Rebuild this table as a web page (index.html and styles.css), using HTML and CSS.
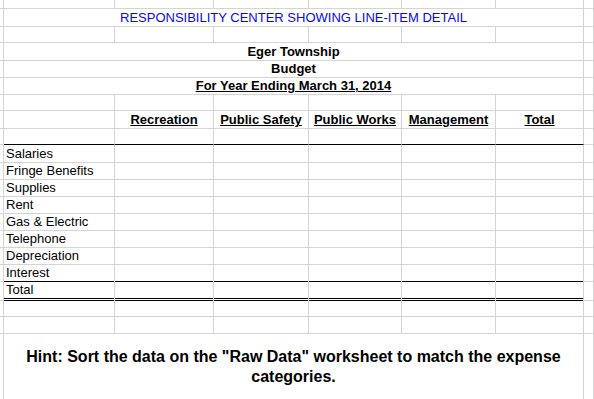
FILE: index.html
```html
<!DOCTYPE html>
<html lang="en">
<head>
<meta charset="utf-8">
<title>Responsibility Center Showing Line-Item Detail</title>
<link rel="stylesheet" href="styles.css">
</head>
<body>
<div class="sheet">
  <div class="row row-top">
    <div class="cell"></div><div class="cell"></div><div class="cell"></div><div class="cell"></div>
    <div class="cell"></div><div class="cell"></div><div class="cell"></div><div class="cell"></div>
  </div>

  <div class="row">
    <div class="cell"></div>
    <div class="cell span title">RESPONSIBILITY CENTER SHOWING LINE-ITEM DETAIL</div>
    <div class="cell"></div>
  </div>

  <div class="row">
    <div class="cell"></div><div class="cell"></div><div class="cell"></div><div class="cell"></div>
    <div class="cell"></div><div class="cell"></div><div class="cell"></div><div class="cell"></div>
  </div>

  <div class="row">
    <div class="cell"></div>
    <div class="cell span strong">Eger Township</div>
    <div class="cell"></div>
  </div>

  <div class="row">
    <div class="cell"></div>
    <div class="cell span strong">Budget</div>
    <div class="cell"></div>
  </div>

  <div class="row">
    <div class="cell"></div>
    <div class="cell span strong"><span class="underlined">For Year Ending March 31, 2014</span></div>
    <div class="cell"></div>
  </div>

  <div class="row">
    <div class="cell"></div><div class="cell"></div><div class="cell"></div><div class="cell"></div>
    <div class="cell"></div><div class="cell"></div><div class="cell"></div><div class="cell"></div>
  </div>

  <div class="row">
    <div class="cell"></div>
    <div class="cell"></div>
    <div class="cell col-head"><span class="underlined">Recreation</span></div>
    <div class="cell col-head"><span class="underlined">Public Safety</span></div>
    <div class="cell col-head"><span class="underlined">Public Works</span></div>
    <div class="cell col-head"><span class="underlined">Management</span></div>
    <div class="cell col-head"><span class="underlined">Total</span></div>
    <div class="cell"></div>
  </div>

  <div class="row">
    <div class="cell"></div>
    <div class="cell rule-below"></div><div class="cell rule-below"></div><div class="cell rule-below"></div>
    <div class="cell rule-below"></div><div class="cell rule-below"></div><div class="cell rule-below"></div>
    <div class="cell"></div>
  </div>

  <div class="row">
    <div class="cell"></div><div class="cell label">Salaries</div><div class="cell"></div><div class="cell"></div>
    <div class="cell"></div><div class="cell"></div><div class="cell"></div><div class="cell"></div>
  </div>
  <div class="row">
    <div class="cell"></div><div class="cell label">Fringe Benefits</div><div class="cell"></div><div class="cell"></div>
    <div class="cell"></div><div class="cell"></div><div class="cell"></div><div class="cell"></div>
  </div>
  <div class="row">
    <div class="cell"></div><div class="cell label">Supplies</div><div class="cell"></div><div class="cell"></div>
    <div class="cell"></div><div class="cell"></div><div class="cell"></div><div class="cell"></div>
  </div>
  <div class="row">
    <div class="cell"></div><div class="cell label">Rent</div><div class="cell"></div><div class="cell"></div>
    <div class="cell"></div><div class="cell"></div><div class="cell"></div><div class="cell"></div>
  </div>
  <div class="row">
    <div class="cell"></div><div class="cell label">Gas &amp; Electric</div><div class="cell"></div><div class="cell"></div>
    <div class="cell"></div><div class="cell"></div><div class="cell"></div><div class="cell"></div>
  </div>
  <div class="row">
    <div class="cell"></div><div class="cell label">Telephone</div><div class="cell"></div><div class="cell"></div>
    <div class="cell"></div><div class="cell"></div><div class="cell"></div><div class="cell"></div>
  </div>
  <div class="row">
    <div class="cell"></div><div class="cell label">Depreciation</div><div class="cell"></div><div class="cell"></div>
    <div class="cell"></div><div class="cell"></div><div class="cell"></div><div class="cell"></div>
  </div>
  <div class="row">
    <div class="cell"></div>
    <div class="cell label rule-below">Interest</div>
    <div class="cell rule-below"></div><div class="cell rule-below"></div><div class="cell rule-below"></div>
    <div class="cell rule-below"></div><div class="cell rule-below"></div>
    <div class="cell"></div>
  </div>

  <div class="row row-total">
    <div class="cell"></div>
    <div class="cell label double-below">Total</div>
    <div class="cell double-below"></div><div class="cell double-below"></div><div class="cell double-below"></div>
    <div class="cell double-below"></div><div class="cell double-below"></div>
    <div class="cell"></div>
  </div>

  <div class="row">
    <div class="cell"></div><div class="cell"></div><div class="cell"></div><div class="cell"></div>
    <div class="cell"></div><div class="cell"></div><div class="cell"></div><div class="cell"></div>
  </div>
  <div class="row">
    <div class="cell"></div><div class="cell"></div><div class="cell"></div><div class="cell"></div>
    <div class="cell"></div><div class="cell"></div><div class="cell"></div><div class="cell"></div>
  </div>

  <div class="row row-hint">
    <div class="cell open"></div>
    <div class="cell span hint open">Hint: Sort the data on the "Raw Data" worksheet to match the expense categories.</div>
    <div class="cell open"></div>
  </div>
</div>
</body>
</html>
```

FILE: styles.css
```css
* {
  box-sizing: border-box;
  margin: 0;
  padding: 0;
}

html,
body {
  background: #ffffff;
}

body {
  width: 594px;
  height: 399px;
  overflow: hidden;
  font-family: "Liberation Sans", Arial, sans-serif;
  font-size: 13px;
  color: #000000;
}

/* worksheet: rows stacked, every row shares one column template */
.sheet {
  display: flex;
  flex-direction: column;
  width: 594px;
}

.row {
  display: grid;
  grid-template-columns: 4px 111px 99px 95px 93px 94px 88px 1fr;
  height: 17px;
}

.row-top {
  height: 9px;
}

.row-total {
  height: 19px;
}

.row-hint {
  height: 65px;
}

.cell {
  border-right: 1px solid #d4d4d4;
  border-bottom: 1px solid #d4d4d4;
  padding-top: 1px;
  line-height: 16px;
  white-space: nowrap;
}

/* merged across the six sheet columns */
.span {
  grid-column: span 6;
  text-align: center;
}

.title {
  color: #0808f0;
}

.strong {
  font-weight: bold;
}

.underlined {
  text-decoration: underline;
  text-decoration-thickness: 1px;
  text-underline-offset: 1px;
}

.col-head {
  font-weight: bold;
  text-align: center;
}

.label {
  padding-left: 2px;
}

.rule-below {
  border-bottom-color: #000000;
}

.double-below {
  border-bottom: 3px double #000000;
}

.open {
  border-bottom: none;
}

.hint {
  font-size: 16px;
  font-weight: bold;
  line-height: 20px;
  padding-top: 13px;
  white-space: normal;
}
```
